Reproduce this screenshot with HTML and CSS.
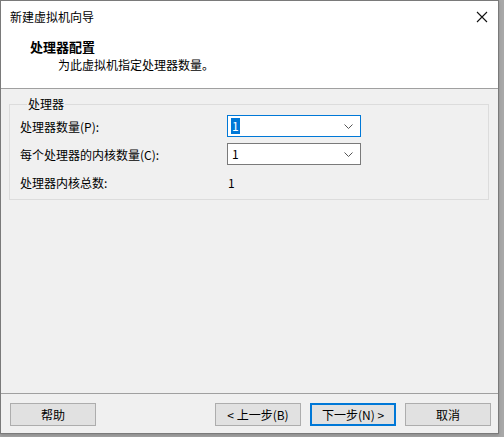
FILE: index.html
```html
<!DOCTYPE html>
<html lang="zh-CN">
<head>
    <meta charset="UTF-8">
    <title>新建虚拟机向导</title>
    <link rel="stylesheet" href="styles.css">
</head>
<body>
    <div class="window">
        <div class="titlebar">
            <span class="title">新建虚拟机向导</span>
            <svg class="close" width="12" height="12" viewBox="0 0 12 12">
                <path d="M1 1 L11 11 M11 1 L1 11" stroke="#111" stroke-width="1.1" fill="none"/>
            </svg>
        </div>

        <div class="wizard-header">
            <h2>处理器配置</h2>
            <p>为此虚拟机指定处理器数量。</p>
        </div>

        <div class="wizard-body">
            <fieldset class="group">
                <legend>处理器</legend>
                <div class="form-grid">
                    <label>处理器数量(P):</label>
                    <div class="combo focused">
                        <span class="value selected">1</span>
                        <svg class="chevron" width="9" height="5" viewBox="0 0 9 5">
                            <path d="M0.5 0.5 L4.5 4.5 L8.5 0.5" stroke="#555" fill="none"/>
                        </svg>
                    </div>

                    <label>每个处理器的内核数量(C):</label>
                    <div class="combo">
                        <span class="value">1</span>
                        <svg class="chevron" width="9" height="5" viewBox="0 0 9 5">
                            <path d="M0.5 0.5 L4.5 4.5 L8.5 0.5" stroke="#555" fill="none"/>
                        </svg>
                    </div>

                    <label>处理器内核总数:</label>
                    <span class="total">1</span>
                </div>
            </fieldset>
        </div>

        <div class="wizard-footer">
            <button class="btn">帮助</button>
            <div class="spacer"></div>
            <button class="btn">&lt; 上一步(B)</button>
            <button class="btn default">下一步(N) &gt;</button>
            <button class="btn">取消</button>
        </div>
    </div>
</body>
</html>
```

FILE: styles.css
```css
/* Reset */
* {
    margin: 0;
    padding: 0;
    box-sizing: border-box;
}

body {
    font-family: "Noto Sans CJK SC", "Noto Sans", sans-serif;
    font-size: 12px;
    color: #000;
    background-color: #a8a8a8;
    width: 504px;
    height: 437px;
    overflow: hidden;
}

/* Dialog window */
.window {
    width: 499px;
    height: 434px;
    border: 1px solid #7a7a7a;
    background-color: #f0f0f0;
    display: flex;
    flex-direction: column;
    box-shadow: 0 2px 3px rgba(0, 0, 0, 0.15);
}

.titlebar {
    height: 29px;
    background-color: #fff;
    display: flex;
    align-items: center;
    justify-content: space-between;
    padding: 3px 9px 0 9px;
}

.titlebar .title {
    line-height: 16px;
}

.titlebar .close {
    margin-right: 1px;
}

/* Header */
.wizard-header {
    height: 59px;
    background-color: #fff;
    border-bottom: 1px solid #a0a0a0;
    padding: 8px 0 0 29px;
}

.wizard-header h2 {
    font-size: 13px;
    font-weight: bold;
    line-height: 18px;
}

.wizard-header p {
    line-height: 18px;
    padding-left: 28px;
}

/* Body */
.wizard-body {
    flex: 1;
    padding: 7px 9px 0 8px;
}

.group {
    border: 1px solid #dcdcdc;
    padding: 3px 10px 6px 10px;
}

.group legend {
    margin-left: 7px;
    padding: 0 1px;
    line-height: 16px;
}

.form-grid {
    display: grid;
    grid-template-columns: 207px 134px;
    grid-auto-rows: 22px;
    row-gap: 6px;
    align-items: center;
}

.combo {
    height: 22px;
    border: 1px solid #7a7a7a;
    background-color: #fff;
    display: flex;
    align-items: center;
    justify-content: space-between;
    padding: 0 7px 0 3px;
}

.combo.focused {
    border-color: #0078d7;
}

.combo .value {
    line-height: 16px;
    padding: 0 1px;
}

.combo .value.selected {
    background-color: #0078d7;
    color: #fff;
}

.total {
    padding-left: 1px;
}

/* Footer */
.wizard-footer {
    height: 40px;
    border-top: 1px solid #a0a0a0;
    display: flex;
    gap: 9px;
    padding: 9px 7px 0 9px;
}

.spacer {
    flex: 1;
}

.btn {
    width: 86px;
    height: 23px;
    font-family: inherit;
    font-size: 12px;
    background-color: #e1e1e1;
    border: 1px solid #adadad;
    color: #000;
}

.btn.default {
    border: 2px solid #0078d7;
}
```
